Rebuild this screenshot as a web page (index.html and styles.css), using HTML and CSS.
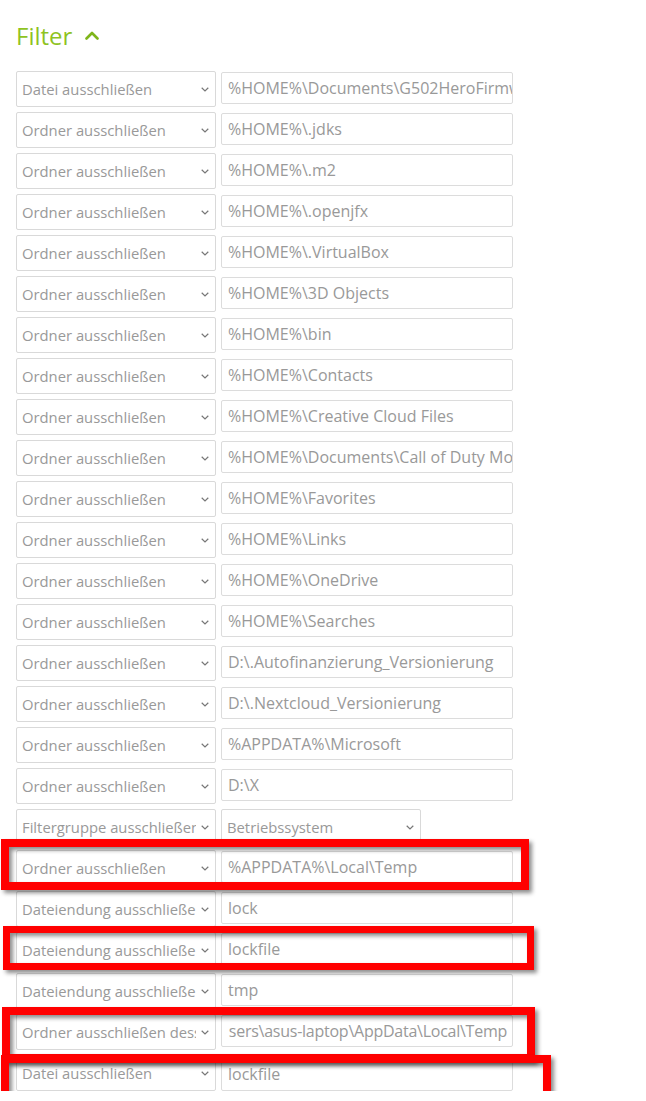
FILE: index.html
```html
<!DOCTYPE html>
<html lang="de">
<head>
<meta charset="utf-8">
<title>Filter</title>
<link rel="stylesheet" href="styles.css">
</head>
<body>
<div class="panel">
  <h2 class="title">Filter <svg class="title-chevron" width="14" height="9" viewBox="0 0 14 9"><path d="M1.5 7.5 L7 2 L12.5 7.5" fill="none" stroke="#7fb51a" stroke-width="2.6" stroke-linecap="round" stroke-linejoin="round"/></svg></h2>
  <div class="rows">
    <div class="row"><div class="sel"><span class="lbl">Datei ausschließen</span><svg class="chev" width="8" height="5" viewBox="0 0 8 5"><path d="M0.7 0.8 L4 4 L7.3 0.8" fill="none" stroke="#777" stroke-width="1.2"/></svg></div><div class="inp"><span class="val">%HOME%\Documents\G502HeroFirmware</span></div></div>
    <div class="row"><div class="sel"><span class="lbl">Ordner ausschließen</span><svg class="chev" width="8" height="5" viewBox="0 0 8 5"><path d="M0.7 0.8 L4 4 L7.3 0.8" fill="none" stroke="#777" stroke-width="1.2"/></svg></div><div class="inp"><span class="val">%HOME%\.jdks</span></div></div>
    <div class="row"><div class="sel"><span class="lbl">Ordner ausschließen</span><svg class="chev" width="8" height="5" viewBox="0 0 8 5"><path d="M0.7 0.8 L4 4 L7.3 0.8" fill="none" stroke="#777" stroke-width="1.2"/></svg></div><div class="inp"><span class="val">%HOME%\.m2</span></div></div>
    <div class="row"><div class="sel"><span class="lbl">Ordner ausschließen</span><svg class="chev" width="8" height="5" viewBox="0 0 8 5"><path d="M0.7 0.8 L4 4 L7.3 0.8" fill="none" stroke="#777" stroke-width="1.2"/></svg></div><div class="inp"><span class="val">%HOME%\.openjfx</span></div></div>
    <div class="row"><div class="sel"><span class="lbl">Ordner ausschließen</span><svg class="chev" width="8" height="5" viewBox="0 0 8 5"><path d="M0.7 0.8 L4 4 L7.3 0.8" fill="none" stroke="#777" stroke-width="1.2"/></svg></div><div class="inp"><span class="val">%HOME%\.VirtualBox</span></div></div>
    <div class="row"><div class="sel"><span class="lbl">Ordner ausschließen</span><svg class="chev" width="8" height="5" viewBox="0 0 8 5"><path d="M0.7 0.8 L4 4 L7.3 0.8" fill="none" stroke="#777" stroke-width="1.2"/></svg></div><div class="inp"><span class="val">%HOME%\3D Objects</span></div></div>
    <div class="row"><div class="sel"><span class="lbl">Ordner ausschließen</span><svg class="chev" width="8" height="5" viewBox="0 0 8 5"><path d="M0.7 0.8 L4 4 L7.3 0.8" fill="none" stroke="#777" stroke-width="1.2"/></svg></div><div class="inp"><span class="val">%HOME%\bin</span></div></div>
    <div class="row"><div class="sel"><span class="lbl">Ordner ausschließen</span><svg class="chev" width="8" height="5" viewBox="0 0 8 5"><path d="M0.7 0.8 L4 4 L7.3 0.8" fill="none" stroke="#777" stroke-width="1.2"/></svg></div><div class="inp"><span class="val">%HOME%\Contacts</span></div></div>
    <div class="row"><div class="sel"><span class="lbl">Ordner ausschließen</span><svg class="chev" width="8" height="5" viewBox="0 0 8 5"><path d="M0.7 0.8 L4 4 L7.3 0.8" fill="none" stroke="#777" stroke-width="1.2"/></svg></div><div class="inp"><span class="val">%HOME%\Creative Cloud Files</span></div></div>
    <div class="row"><div class="sel"><span class="lbl">Ordner ausschließen</span><svg class="chev" width="8" height="5" viewBox="0 0 8 5"><path d="M0.7 0.8 L4 4 L7.3 0.8" fill="none" stroke="#777" stroke-width="1.2"/></svg></div><div class="inp"><span class="val">%HOME%\Documents\Call of Duty Modern Warfare</span></div></div>
    <div class="row"><div class="sel"><span class="lbl">Ordner ausschließen</span><svg class="chev" width="8" height="5" viewBox="0 0 8 5"><path d="M0.7 0.8 L4 4 L7.3 0.8" fill="none" stroke="#777" stroke-width="1.2"/></svg></div><div class="inp"><span class="val">%HOME%\Favorites</span></div></div>
    <div class="row"><div class="sel"><span class="lbl">Ordner ausschließen</span><svg class="chev" width="8" height="5" viewBox="0 0 8 5"><path d="M0.7 0.8 L4 4 L7.3 0.8" fill="none" stroke="#777" stroke-width="1.2"/></svg></div><div class="inp"><span class="val">%HOME%\Links</span></div></div>
    <div class="row"><div class="sel"><span class="lbl">Ordner ausschließen</span><svg class="chev" width="8" height="5" viewBox="0 0 8 5"><path d="M0.7 0.8 L4 4 L7.3 0.8" fill="none" stroke="#777" stroke-width="1.2"/></svg></div><div class="inp"><span class="val">%HOME%\OneDrive</span></div></div>
    <div class="row"><div class="sel"><span class="lbl">Ordner ausschließen</span><svg class="chev" width="8" height="5" viewBox="0 0 8 5"><path d="M0.7 0.8 L4 4 L7.3 0.8" fill="none" stroke="#777" stroke-width="1.2"/></svg></div><div class="inp"><span class="val">%HOME%\Searches</span></div></div>
    <div class="row"><div class="sel"><span class="lbl">Ordner ausschließen</span><svg class="chev" width="8" height="5" viewBox="0 0 8 5"><path d="M0.7 0.8 L4 4 L7.3 0.8" fill="none" stroke="#777" stroke-width="1.2"/></svg></div><div class="inp"><span class="val">D:\.Autofinanzierung_Versionierung</span></div></div>
    <div class="row"><div class="sel"><span class="lbl">Ordner ausschließen</span><svg class="chev" width="8" height="5" viewBox="0 0 8 5"><path d="M0.7 0.8 L4 4 L7.3 0.8" fill="none" stroke="#777" stroke-width="1.2"/></svg></div><div class="inp"><span class="val">D:\.Nextcloud_Versionierung</span></div></div>
    <div class="row"><div class="sel"><span class="lbl">Ordner ausschließen</span><svg class="chev" width="8" height="5" viewBox="0 0 8 5"><path d="M0.7 0.8 L4 4 L7.3 0.8" fill="none" stroke="#777" stroke-width="1.2"/></svg></div><div class="inp"><span class="val">%APPDATA%\Microsoft</span></div></div>
    <div class="row"><div class="sel"><span class="lbl">Ordner ausschließen</span><svg class="chev" width="8" height="5" viewBox="0 0 8 5"><path d="M0.7 0.8 L4 4 L7.3 0.8" fill="none" stroke="#777" stroke-width="1.2"/></svg></div><div class="inp"><span class="val">D:\X</span></div></div>
    <div class="row"><div class="sel"><span class="lbl">Filtergruppe ausschließen</span><svg class="chev" width="8" height="5" viewBox="0 0 8 5"><path d="M0.7 0.8 L4 4 L7.3 0.8" fill="none" stroke="#777" stroke-width="1.2"/></svg></div><div class="sel sel-group"><span class="lbl">Betriebssystem</span><svg class="chev" width="8" height="5" viewBox="0 0 8 5"><path d="M0.7 0.8 L4 4 L7.3 0.8" fill="none" stroke="#777" stroke-width="1.2"/></svg></div></div>
    <div class="row"><div class="sel"><span class="lbl">Ordner ausschließen</span><svg class="chev" width="8" height="5" viewBox="0 0 8 5"><path d="M0.7 0.8 L4 4 L7.3 0.8" fill="none" stroke="#777" stroke-width="1.2"/></svg></div><div class="inp"><span class="val">%APPDATA%\Local\Temp</span></div></div>
    <div class="row"><div class="sel"><span class="lbl">Dateiendung ausschließen</span><svg class="chev" width="8" height="5" viewBox="0 0 8 5"><path d="M0.7 0.8 L4 4 L7.3 0.8" fill="none" stroke="#777" stroke-width="1.2"/></svg></div><div class="inp"><span class="val">lock</span></div></div>
    <div class="row"><div class="sel"><span class="lbl">Dateiendung ausschließen</span><svg class="chev" width="8" height="5" viewBox="0 0 8 5"><path d="M0.7 0.8 L4 4 L7.3 0.8" fill="none" stroke="#777" stroke-width="1.2"/></svg></div><div class="inp"><span class="val">lockfile</span></div></div>
    <div class="row"><div class="sel"><span class="lbl">Dateiendung ausschließen</span><svg class="chev" width="8" height="5" viewBox="0 0 8 5"><path d="M0.7 0.8 L4 4 L7.3 0.8" fill="none" stroke="#777" stroke-width="1.2"/></svg></div><div class="inp"><span class="val">tmp</span></div></div>
    <div class="row"><div class="sel"><span class="lbl">Ordner ausschließen dessen Pfad</span><svg class="chev" width="8" height="5" viewBox="0 0 8 5"><path d="M0.7 0.8 L4 4 L7.3 0.8" fill="none" stroke="#777" stroke-width="1.2"/></svg></div><div class="inp inp-end"><span class="val">sers\asus-laptop\AppData\Local\Temp</span></div></div>
    <div class="row"><div class="sel"><span class="lbl">Datei ausschließen</span><svg class="chev" width="8" height="5" viewBox="0 0 8 5"><path d="M0.7 0.8 L4 4 L7.3 0.8" fill="none" stroke="#777" stroke-width="1.2"/></svg></div><div class="inp inp-raised"><span class="val">lockfile</span></div></div>
  </div>
</div>
<div class="marks">
  <div class="mark mark-1"></div>
  <div class="mark mark-2"></div>
  <div class="mark mark-3"></div>
  <div class="mark mark-4"></div>
</div>
</body>
</html>
```
FILE: styles.css
```css
html, body {
  margin: 0;
  padding: 0;
  background: #ffffff;
}
body {
  font-family: "Open Sans", "Noto Sans", Arial, sans-serif;
  position: relative;
  overflow: hidden;
}
.panel {
  padding: 0 0 0 16px;
}
.title {
  margin: 0 0 19px 0;
  padding-top: 19px;
  height: 52px;
  box-sizing: border-box;
  font-weight: 400;
  font-size: 24px;
  line-height: 30px;
  color: #8fc31f;
  display: flex;
  align-items: center;
}
.title-chevron {
  margin-left: 13px;
  margin-top: -1px;
}
.rows {
  display: flex;
  flex-direction: column;
  gap: 5px;
}
.row {
  display: flex;
  gap: 5px;
  align-items: flex-start;
}
.sel {
  width: 200px;
  height: 36px;
  box-sizing: border-box;
  border: 1px solid #d9d9d9;
  border-radius: 2px;
  background: #fff;
  display: flex;
  align-items: center;
  padding: 0 6px 0 5px;
  font-size: 14.8px;
  color: #999;
}
.lbl {
  flex: 1;
  min-width: 0;
  overflow: hidden;
  white-space: nowrap;
  margin-right: 5px;
}
.chev {
  flex: none;
  margin-top: 1px;
}
.inp {
  width: 292px;
  height: 32px;
  margin-top: 1px;
  box-sizing: border-box;
  border: 1px solid #dcdcdc;
  border-radius: 2px;
  background: #fff;
  display: flex;
  align-items: center;
  padding: 0 4px 0 6px;
  font-size: 16px;
  color: #999;
  overflow: hidden;
  white-space: nowrap;
}
.val {
  flex: none;
}
.inp-end {
  justify-content: flex-end;
  padding-right: 5px;
}
.inp-end .val {
  letter-spacing: -0.25px;
}
.inp-raised {
  align-items: flex-start;
  padding-top: 2px;
  height: 31px;
  margin-top: 5px;
}
.marks {
  position: absolute;
  left: 0;
  top: 0;
}
.mark {
  position: absolute;
  box-sizing: border-box;
  border: 8px solid #ff0000;
  filter: drop-shadow(3px 3px 2px rgba(0, 0, 0, 0.45));
}
.mark-1 { left: 1px; top: 839px; width: 528px; height: 51px; }
.mark-2 { left: 3px; top: 926px; width: 531px; height: 44px; border-width: 7px; }
.mark-3 { left: 2px; top: 1007px; width: 533px; height: 55px; }
.mark-4 { left: 1px; top: 1055px; width: 550px; height: 49px; }
```
